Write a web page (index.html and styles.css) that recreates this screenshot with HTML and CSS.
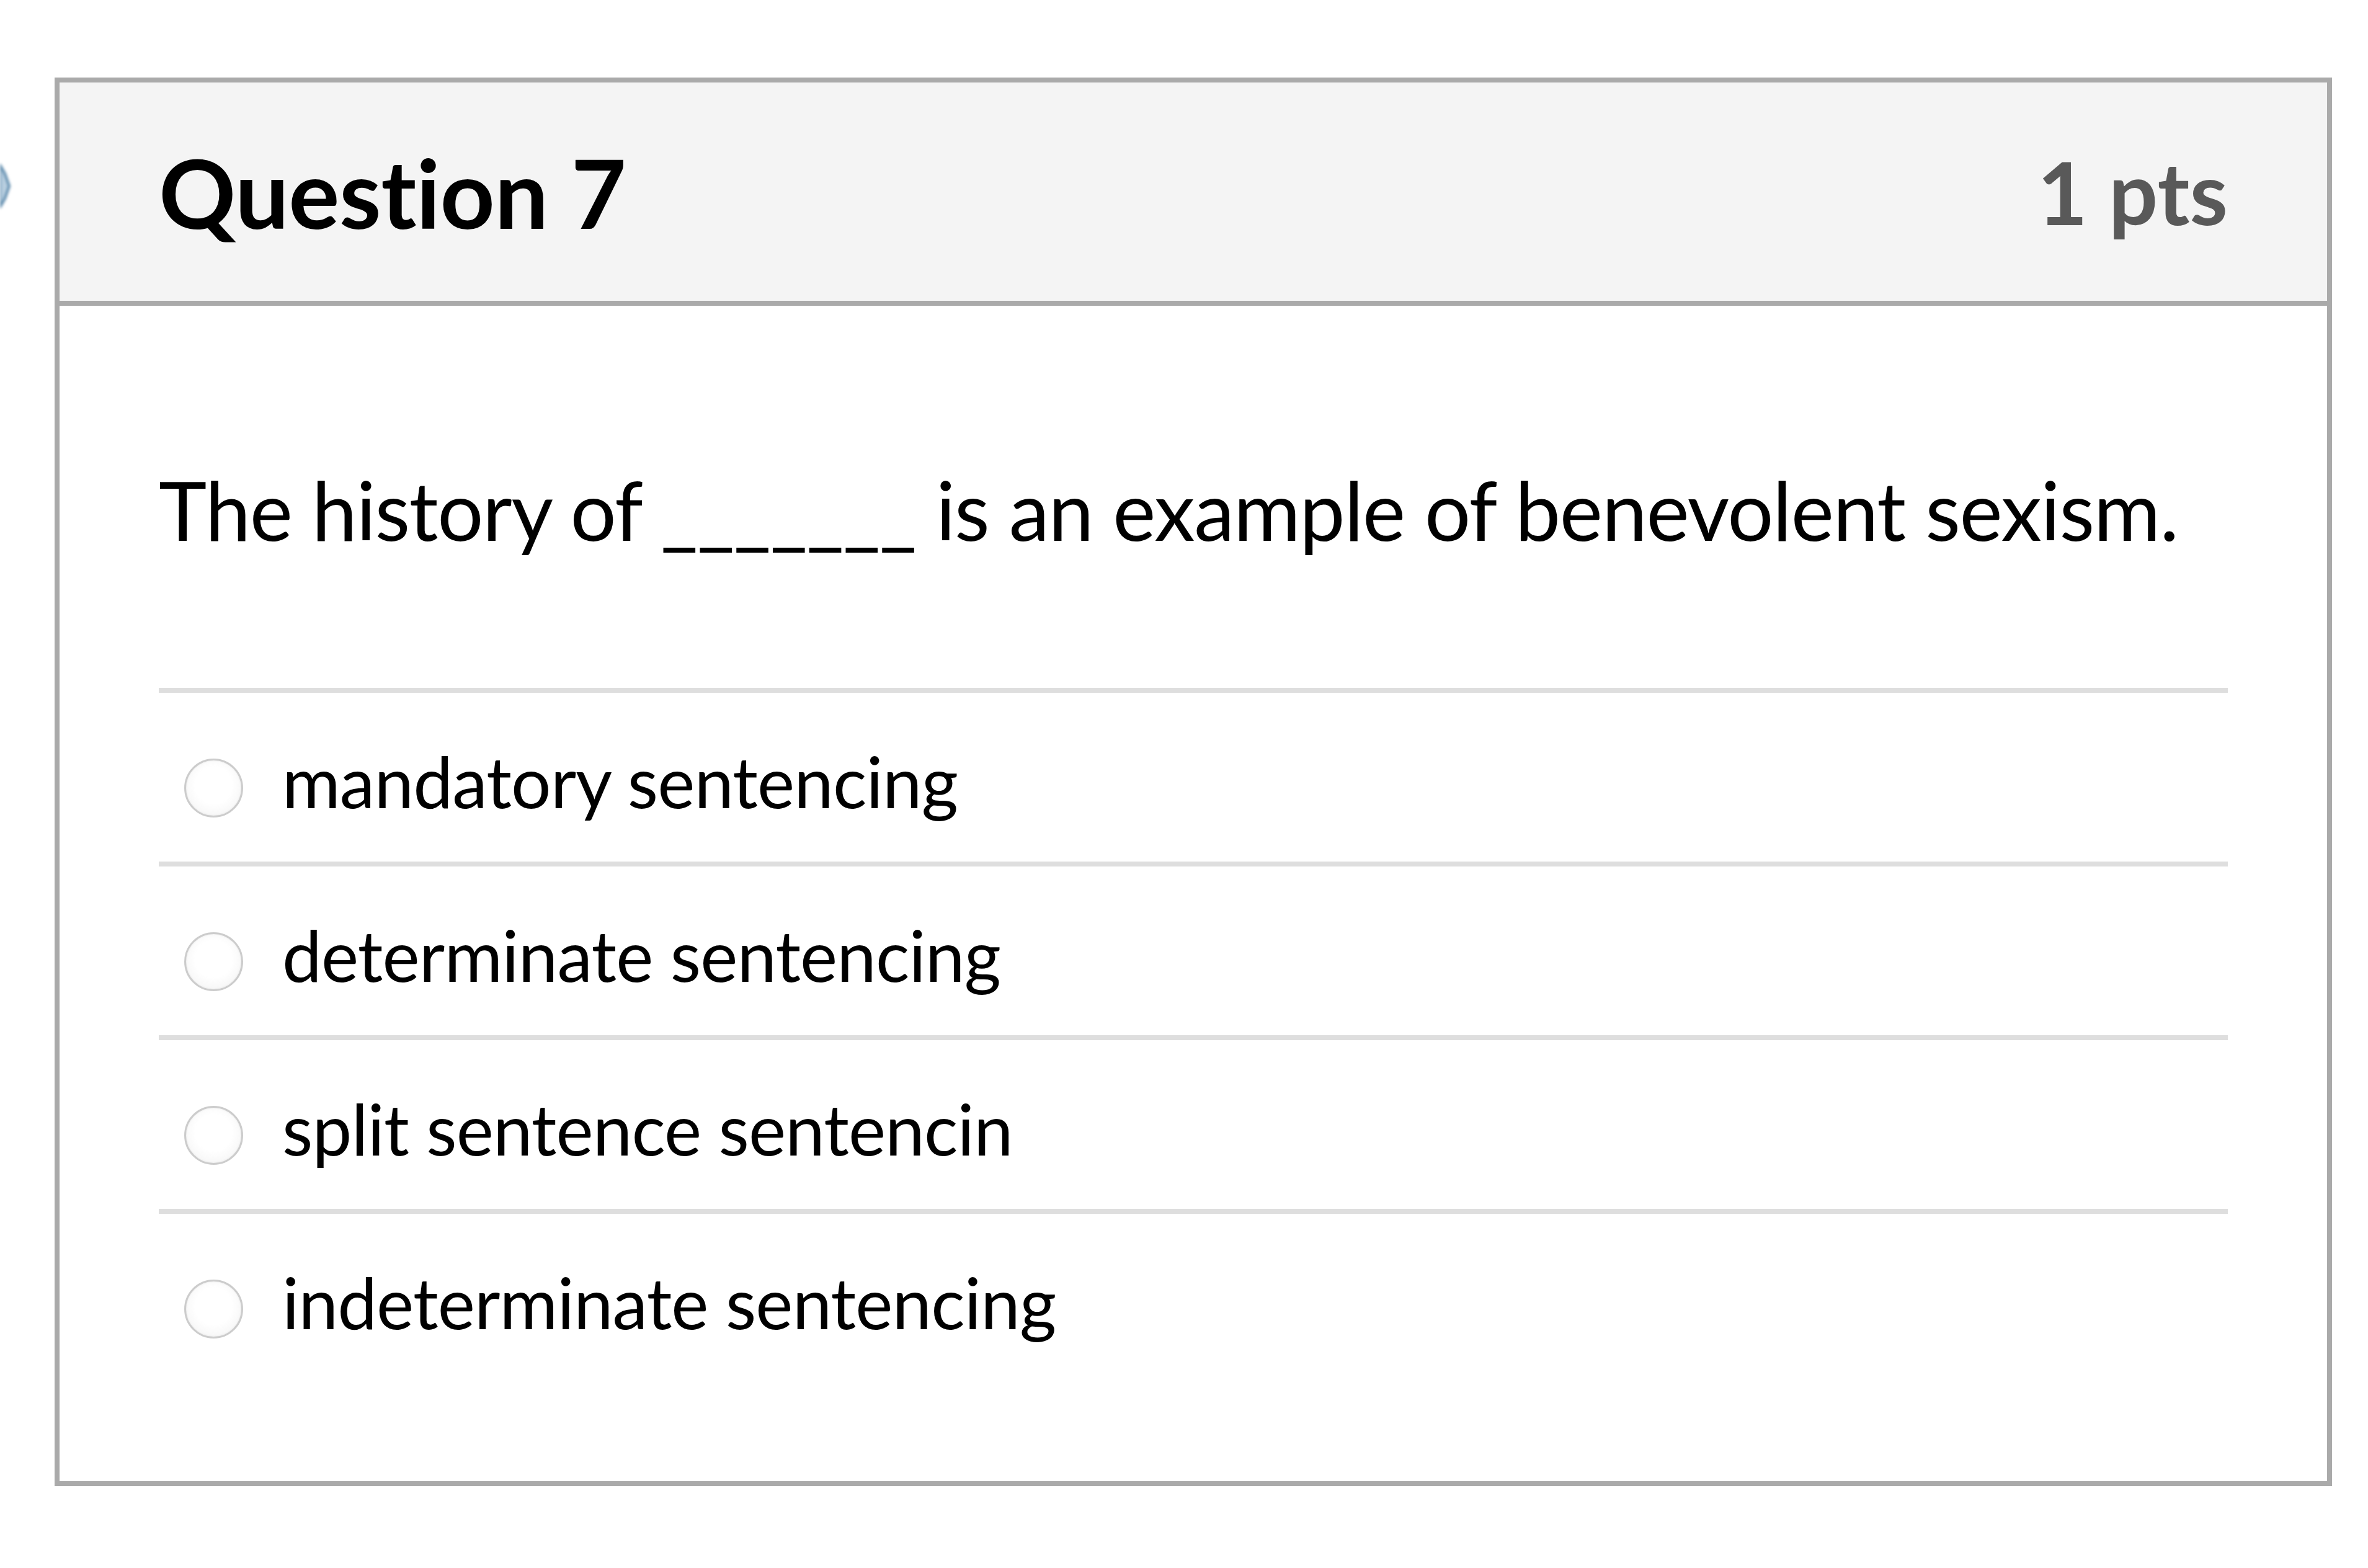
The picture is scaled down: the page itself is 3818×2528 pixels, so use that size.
FILE: index.html
```html
<!DOCTYPE html>
<html lang="en">
<head>
<meta charset="utf-8">
<title>Question 7</title>
<link rel="stylesheet" href="styles.css">
</head>
<body>
<div class="page">
  <svg class="edge-icon" width="20" height="80" viewBox="0 0 20 80" aria-hidden="true">
    <path d="M0 4 L8 18 L15 38 L8 58 L0 72 Z" fill="#b9cfe0" stroke="#5f8cae" stroke-width="4" stroke-linejoin="round"/>
  </svg>
  <div class="question">
    <div class="q-header">
      <h2 class="q-title">Question 7</h2>
      <span class="q-points">1 pts</span>
    </div>
    <div class="q-body">
      <p class="q-text">The history of _______ is an example of benevolent sexism.</p>
      <div class="answers">
        <label class="answer"><span class="radio"></span><span class="answer-text">mandatory sentencing</span></label>
        <label class="answer"><span class="radio"></span><span class="answer-text">determinate sentencing</span></label>
        <label class="answer"><span class="radio"></span><span class="answer-text">split sentence sentencin</span></label>
        <label class="answer"><span class="radio"></span><span class="answer-text">indeterminate sentencing</span></label>
      </div>
    </div>
  </div>
</div>
</body>
</html>
```

FILE: styles.css
```css
html, body {
  margin: 0;
  padding: 0;
  background: #ffffff;
}

body {
  font-family: Lato, "Open Sans", "Liberation Sans", sans-serif;
  color: #000;
}

.page {
  position: relative;
  padding: 125px 58px 0 88px;
}

.edge-icon {
  position: absolute;
  left: 0;
  top: 262px;
  filter: blur(2px);
}

.question {
  border: 8px solid #aaaaaa;
  background: #ffffff;
}

.q-header {
  box-sizing: border-box;
  background: #f4f4f4;
  border-bottom: 8px solid #aaaaaa;
  height: 360px;
  padding: 0 160px;
  display: flex;
  align-items: center;
  justify-content: space-between;
}

.q-title {
  margin: 0;
  font-size: 154px;
  font-weight: 700;
  line-height: 185px;
  letter-spacing: -0.5px;
  color: #000;
}

.q-points {
  font-size: 140px;
  font-weight: 700;
  line-height: 168px;
  color: #595959;
}

.q-body {
  padding: 250px 160px 159px;
}

.q-text {
  margin: 0 0 209px;
  font-size: 131px;
  line-height: 157px;
  font-weight: 400;
  letter-spacing: -1.35px;
}

.answers {
  display: flex;
  flex-direction: column;
}

.answer {
  display: flex;
  align-items: flex-start;
  border-top: 8px solid #dedede;
  padding: 70px 0 58px 41px;
}

.radio {
  flex: none;
  width: 95px;
  height: 95px;
  box-sizing: border-box;
  margin-top: 36px;
  margin-right: 63px;
  border-radius: 50%;
  border: 3px solid #cccccc;
  background: radial-gradient(circle at 50% 45%, #ffffff 45%, #f0f0f0 100%);
  box-shadow: inset 0 0 3px rgba(0, 0, 0, 0.08);
}

.answer-text {
  font-size: 114px;
  line-height: 144px;
  font-weight: 400;
  letter-spacing: -0.9px;
}
```
